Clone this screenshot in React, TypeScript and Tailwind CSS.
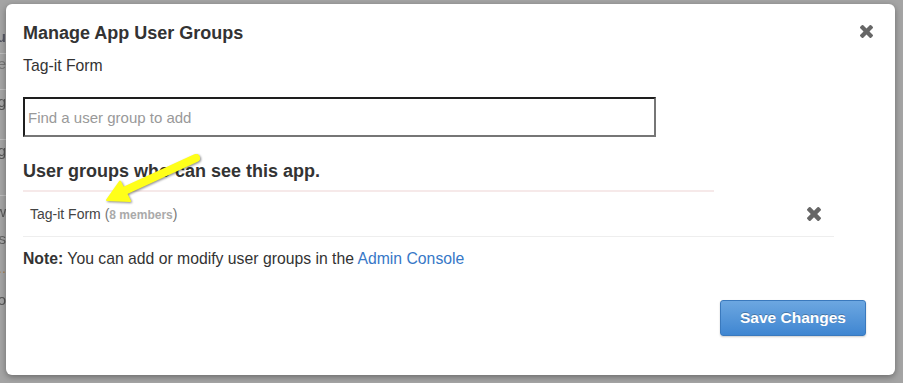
import React from 'react';

const TimesIcon: React.FC<{ className?: string }> = ({ className }) => (
  <svg viewBox="110 366 1188 1188" className={className} fill="currentColor" aria-hidden="true">
    <path d="M1298 1322q0 40-28 68l-136 136q-28 28-68 28t-68-28l-294-294-294 294q-28 28-68 28t-68-28l-136-136q-28-28-28-68t28-68l294-294-294-294q-28-28-28-68t28-68l136-136q28-28 68-28t68 28l294 294 294-294q28-28 68-28t68 28l136 136q28 28 28 68t-28 68l-294 294 294 294q28 28 28 68z" />
  </svg>
);

// yellow callout arrow pasted over the screenshot
const CalloutArrow: React.FC = () => (
  <svg
    width="110"
    height="60"
    viewBox="0 0 110 60"
    className="absolute left-[94px] top-[146px] [filter:drop-shadow(1px_1px_1px_rgba(0,0,0,0.45))]"
  >
    <line x1="24" y1="41" x2="96" y2="8" stroke="#ffff1a" strokeWidth="8" strokeLinecap="round" />
    <polygon points="7,50 20,31.5 30,51" fill="#ffff1a" stroke="#ffff1a" strokeWidth="2" strokeLinejoin="round" />
  </svg>
);

// bits of the page behind the overlay, cut off by the modal
const PageBehind: React.FC = () => {
  const rows: { h: string; text?: string; cls?: string; line?: boolean }[] = [
    { h: 'h-[22px]' },
    { h: 'h-[20px]', text: 'Menu', cls: 'font-bold text-[#23263a]' },
    { h: 'h-[8px]', line: true },
    { h: 'h-[18px]', text: 'Type', cls: 'text-[#5a5a5a]' },
    { h: 'h-[18px]', line: true },
    { h: 'h-[22px]', text: 'Setting', cls: 'text-[#222] underline' },
    { h: 'h-[28px]', line: true },
    { h: 'h-[20px]', text: 'Setting', cls: 'text-[#222]' },
    { h: 'h-[36px]', line: true },
    { h: 'h-[30px]', text: 'new', cls: 'text-[#222]' },
    { h: 'h-[24px]', text: 'ss', cls: 'text-[#333]' },
    { h: 'h-[34px]', text: '...', cls: 'text-[#a86a20]' },
    { h: 'h-[30px]', text: 'no', cls: 'text-[#222]' },
  ];
  return (
    <div className="w-[6px] shrink-0 overflow-hidden flex flex-col pt-[4px] opacity-60">
      {rows.map((r, i) => (
        <div key={i} className={`${r.h} flex items-center justify-end text-[15px] leading-none`}>
          {r.line ? (
            <div className="w-full h-px bg-[#cfcfcf] self-end" />
          ) : r.text ? (
            <span className={`whitespace-nowrap ${r.cls}`}>{r.text}</span>
          ) : null}
        </div>
      ))}
    </div>
  );
};

export default function App() {
  return (
    <div className="w-[903px] h-[383px] bg-[#a4a4a4] flex items-start overflow-hidden font-['Liberation_Sans',Arial,sans-serif] text-[#333]">
      <PageBehind />

      <div className="relative mt-[4px] w-[889px] h-[371px] bg-white rounded-[6px] shadow-[0_2px_6px_rgba(0,0,0,0.35)] pt-[18px] px-[17px]">
        <div className="flex items-start justify-between">
          <h1 className="text-[18px] leading-[22px] font-bold text-[#333]">Manage App User Groups</h1>
          <button className="mt-[3px] mr-[5px] text-[#666]">
            <TimesIcon className="w-[13px] h-[13px]" />
          </button>
        </div>

        <p className="mt-[12px] text-[15.75px] leading-[20px] text-[#333]">Tag-it Form</p>

        <input
          type="text"
          placeholder="Find a user group to add"
          className="mt-[21px] block w-[633px] h-[40px] px-[3px] border-2 border-t-[#1e1e1e] border-l-[#1e1e1e] border-r-[#767676] border-b-[#767676] text-[15px] outline-none placeholder:text-[#999]"
        />

        <div className="mt-[23px] w-[691px] border-b-2 border-[#f6e9e9] pb-[8px]">
          <h2 className="text-[18px] leading-[22px] font-bold text-[#333]">User groups who can see this app.</h2>
        </div>

        <div className="w-[811px] flex items-center justify-between border-b border-[#eeeeee] h-[45px] pl-[7px] pr-[13px]">
          <span className="text-[14px] text-[#444]">
            Tag-it Form <span className="text-[#777]">(</span>
            <span className="text-[12px] font-bold text-[#aaa]">8 members</span>
            <span className="text-[#777]">)</span>
          </span>
          <button className="text-[#666]">
            <TimesIcon className="w-[14px] h-[14px]" />
          </button>
        </div>

        <p className="mt-[12px] text-[15.75px] leading-[20px] text-[#333]">
          <span className="font-bold">Note:</span> You can add or modify user groups in the{' '}
          <a className="text-[#3778c7]">Admin Console</a>
        </p>

        <div className="flex justify-end mt-[31px] pr-[12px]">
          <button className="w-[146px] h-[36px] rounded-[3px] border border-[#3a79bd] bg-gradient-to-b from-[#6ca7e1] to-[#3f86d1] text-white text-[15.5px] font-bold shadow-[0_1px_2px_rgba(0,0,0,0.2)] [text-shadow:0_-1px_0_rgba(0,0,0,0.25)]">
            Save Changes
          </button>
        </div>

        <CalloutArrow />
      </div>
    </div>
  );
}
